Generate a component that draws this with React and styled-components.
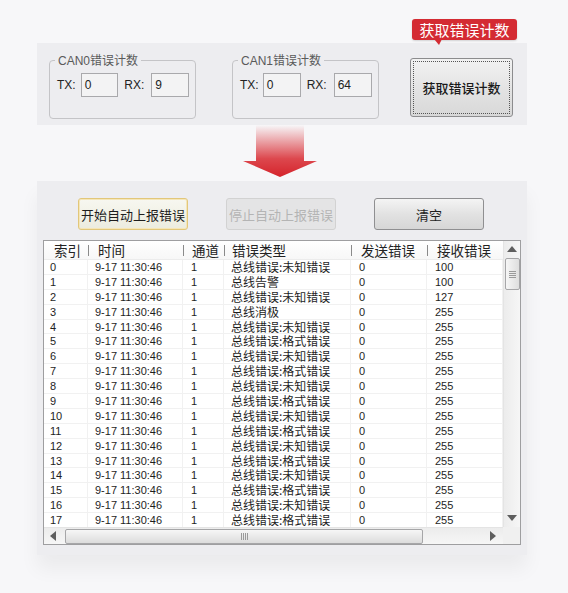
import styled, { createGlobalStyle } from "styled-components";

const GlobalStyle = createGlobalStyle`
  html, body { margin: 0; padding: 0; background: #f7f7f9; }
  body { font-family: "Liberation Sans", "Noto Sans CJK SC", sans-serif; color: #1e1e1e; }
`;

const Page = styled.div`
  width: 568px;
  height: 593px;
  overflow: hidden;
  background: #f7f7f9;
  display: flex;
  flex-direction: column;
`;

const TopPanel = styled.div`
  margin: 43px 0 0 37px;
  width: 490px;
  height: 82px;
  box-sizing: border-box;
  background: #ededf0;
  display: flex;
  align-items: flex-start;
  padding: 17px 0 0 12px;
`;

const GroupBox = styled.div`
  position: relative;
  width: 147px;
  height: 59px;
  box-sizing: border-box;
  border: 1px solid #c4c4c7;
  border-radius: 4px;
  margin-right: ${(p) => p.$gap}px;
  display: flex;
  align-items: flex-start;
  padding: 12px 0 0 7px;
`;

const GroupTitle = styled.span`
  position: absolute;
  top: -8px;
  left: 5px;
  padding: 0 3px;
  background: #ededf0;
  font-size: 12px;
  line-height: 16px;
  color: #5a5a5a;
`;

const FieldLabel = styled.span`
  font-size: 12px;
  line-height: 24px;
  color: #222;
  margin-right: ${(p) => p.$gap}px;
`;

const ValueBox = styled.div`
  width: 38px;
  height: 24px;
  box-sizing: border-box;
  border: 1px solid #a9a9ac;
  background: #f3f3f4;
  font-size: 12px;
  line-height: 22px;
  padding-left: 3px;
  margin-right: 6px;
  color: #222;
`;

const ButtonWrap = styled.div`
  position: relative;
  margin-top: -2px;
`;

const FetchButton = styled.div`
  width: 103px;
  height: 59px;
  box-sizing: border-box;
  border: 1px solid #8c8c8e;
  border-radius: 3px;
  background: linear-gradient(#f2f2f2, #e4e4e4 50%, #d8d8d8);
  padding: 2px;
  display: flex;
`;

const FocusRing = styled.div`
  flex: 1;
  border: 1px dotted #555;
  display: flex;
  align-items: center;
  justify-content: center;
  font-size: 13px;
  font-weight: 500;
  color: #1a1a1a;
  font-family: "Noto Sans CJK SC", sans-serif;
`;

const Tooltip = styled.div`
  position: absolute;
  left: 2px;
  top: -39px;
  width: 105px;
  height: 21px;
  border-radius: 3px;
  background: #d42b33;
  color: #fff;
  font-size: 15px;
  line-height: 21px;
  text-align: center;
  font-family: "Noto Sans CJK SC", sans-serif;
  box-shadow: 0 1px 2px rgba(0, 0, 0, 0.15);
  &::after {
    content: "";
    position: absolute;
    left: 22px;
    bottom: -5px;
    border-left: 5px solid transparent;
    border-right: 3px solid transparent;
    border-top: 6px solid #d42b33;
  }
`;

const Arrow = styled.svg`
  display: block;
  margin: 0 0 4px 243px;
`;

const BottomPanel = styled.div`
  margin-left: 37px;
  width: 490px;
  height: 374px;
  box-sizing: border-box;
  background: #ededf0;
  padding: 17px 6px 0;
  box-shadow: 0 14px 18px rgba(0, 0, 0, 0.05);
`;

const ButtonRow = styled.div`
  display: flex;
  gap: 38px;
  padding-left: 35px;
  margin-bottom: 10px;
`;

const ActionButton = styled.div`
  width: 110px;
  height: 32px;
  box-sizing: border-box;
  border-radius: 3px;
  display: flex;
  align-items: center;
  justify-content: center;
  font-size: 13px;
  font-family: "Noto Sans CJK SC", sans-serif;
  border: 1px solid ${(p) => (p.$variant === "hot" ? "#e2c77a" : p.$variant === "off" ? "#d2d2d2" : "#8f8f91")};
  color: ${(p) => (p.$variant === "off" ? "#b4b4b4" : "#1e1e1e")};
  background: ${(p) =>
    p.$variant === "hot"
      ? "linear-gradient(#f7f7f0, #ececdf)"
      : p.$variant === "off"
      ? "#e4e4e5"
      : "linear-gradient(#f4f4f4, #e2e2e2 50%, #d6d6d6)"};
  box-shadow: ${(p) => (p.$variant === "hot" ? "inset 0 0 0 1px #f5e6b8" : "none")};
`;

const ListBox = styled.div`
  width: 478px;
  height: 305px;
  box-sizing: border-box;
  border: 1px solid #9e9ea0;
  background: #fff;
  display: grid;
  grid-template-columns: 1fr 17px;
  grid-template-rows: 1fr 17px;
  overflow: hidden;
`;

const ListBody = styled.div`
  overflow: hidden;
`;

const cols = "44px 95px 41px 127px 76px 1fr";

const HeaderRow = styled.div`
  display: grid;
  grid-template-columns: ${cols};
  height: 18px;
  background: linear-gradient(#fff, #f7f7f7);
  border-bottom: 1px solid #ececec;
`;

const HeadCell = styled.div`
  position: relative;
  font-size: 13.5px;
  line-height: 18px;
  padding-left: ${(p) => p.$pad}px;
  font-family: "Noto Sans CJK SC", sans-serif;
  color: #222;
  white-space: nowrap;
  &::before {
    content: "";
    display: ${(p) => (p.$first ? "none" : "block")};
    position: absolute;
    left: 0;
    top: 4px;
    height: 11px;
    border-left: 1px solid #8a8a8a;
  }
`;

const DataRow = styled.div`
  display: grid;
  grid-template-columns: ${cols};
  height: 14.9px;
  border-bottom: 1px solid #f1f1f1;
  box-sizing: border-box;
`;

const Cell = styled.div`
  font-size: ${(p) => (p.$cjk ? 12 : 11)}px;
  line-height: 14px;
  height: 14px;
  padding-left: ${(p) => p.$pad}px;
  white-space: nowrap;
  color: #1e1e1e;
  border-right: 1px solid #f1f1f1;
  font-family: ${(p) => (p.$cjk ? '"Noto Sans CJK SC", sans-serif' : '"Liberation Sans", sans-serif')};
`;

const VScroll = styled.div`
  background: linear-gradient(90deg, #ececec, #f6f6f6);
  border-left: 1px solid #e4e4e4;
  display: flex;
  flex-direction: column;
  align-items: center;
`;

const HScroll = styled.div`
  background: linear-gradient(#ececec, #f6f6f6);
  border-top: 1px solid #e4e4e4;
  display: flex;
  align-items: center;
`;

const Corner = styled.div`
  background: #f0f0f0;
`;

const VThumb = styled.div`
  width: 15px;
  height: 32px;
  box-sizing: border-box;
  border: 1px solid #a6a6a8;
  border-radius: 2px;
  background: linear-gradient(90deg, #f6f6f6, #dedede);
  display: flex;
  flex-direction: column;
  align-items: center;
  justify-content: center;
  gap: 1px;
  margin-top: 1px;
`;

const HThumb = styled.div`
  width: 358px;
  height: 15px;
  box-sizing: border-box;
  border: 1px solid #a6a6a8;
  border-radius: 2px;
  background: linear-gradient(#f6f6f6, #dcdcdc);
  display: flex;
  align-items: center;
  justify-content: center;
  gap: 1px;
  margin-left: 4px;
`;

const Grip = styled.span`
  display: block;
  background: #9a9a9a;
  width: ${(p) => (p.$v ? "7px" : "1px")};
  height: ${(p) => (p.$v ? "1px" : "7px")};
`;

const Spacer = styled.div`
  flex: 1;
`;

const Tri = ({ dir }) => {
  const pts = {
    up: "0,6 5,0 10,6",
    down: "0,0 10,0 5,6",
    left: "6,0 6,10 0,5",
    right: "0,0 0,10 6,5",
  }[dir];
  const w = dir === "up" || dir === "down" ? 10 : 6;
  const h = dir === "up" || dir === "down" ? 6 : 10;
  return (
    <svg width={w} height={h} viewBox={`0 0 ${w} ${h}`} style={{ display: "block", flexShrink: 0 }}>
      <polygon points={pts} fill="#5e5e5e" />
    </svg>
  );
};

const TriBox = styled.div`
  width: ${(p) => p.$w}px;
  height: ${(p) => p.$h}px;
  display: flex;
  align-items: center;
  justify-content: center;
`;

const types = ["总线错误:未知错误", "总线告警", "总线错误:未知错误", "总线消极"];
const rows = Array.from({ length: 18 }, (_, i) => ({
  idx: i,
  type: i < 4 ? types[i] : i % 2 === 0 ? "总线错误:未知错误" : "总线错误:格式错误",
  recv: i < 2 ? 100 : i === 2 ? 127 : 255,
}));

const headers = [
  ["索引", 10],
  ["时间", 10],
  ["通道", 9],
  ["错误类型", 8],
  ["发送错误", 10],
  ["接收错误", 10],
];

export default function App() {
  return (
    <Page>
      <GlobalStyle />
      <TopPanel>
        <GroupBox $gap={36}>
          <GroupTitle>CAN0错误计数</GroupTitle>
          <FieldLabel $gap={5}>TX:</FieldLabel>
          <ValueBox>0</ValueBox>
          <FieldLabel $gap={7}>RX:</FieldLabel>
          <ValueBox>9</ValueBox>
        </GroupBox>
        <GroupBox $gap={31}>
          <GroupTitle>CAN1错误计数</GroupTitle>
          <FieldLabel $gap={4}>TX:</FieldLabel>
          <ValueBox>0</ValueBox>
          <FieldLabel $gap={7}>RX:</FieldLabel>
          <ValueBox>64</ValueBox>
        </GroupBox>
        <ButtonWrap>
          <Tooltip>获取错误计数</Tooltip>
          <FetchButton>
            <FocusRing>获取错误计数</FocusRing>
          </FetchButton>
        </ButtonWrap>
      </TopPanel>

      <Arrow width="74" height="52" viewBox="0 0 74 52">
        <defs>
          <linearGradient id="arrowFade" x1="0" y1="0" x2="0" y2="1">
            <stop offset="0" stopColor="#d8282f" stopOpacity="0" />
            <stop offset="0.65" stopColor="#d8282f" stopOpacity="0.85" />
            <stop offset="1" stopColor="#d4232b" stopOpacity="1" />
          </linearGradient>
        </defs>
        <polygon points="13,0 61,0 61,36 74,36 37,52 0,36 13,36" fill="url(#arrowFade)" />
      </Arrow>

      <BottomPanel>
        <ButtonRow>
          <ActionButton $variant="hot">开始自动上报错误</ActionButton>
          <ActionButton $variant="off">停止自动上报错误</ActionButton>
          <ActionButton>清空</ActionButton>
        </ButtonRow>
        <ListBox>
          <ListBody>
            <HeaderRow>
              {headers.map(([t, pad], i) => (
                <HeadCell key={t} $pad={pad} $first={i === 0}>
                  {t}
                </HeadCell>
              ))}
            </HeaderRow>
            {rows.map((r) => (
              <DataRow key={r.idx}>
                <Cell $pad={6}>{r.idx}</Cell>
                <Cell $pad={7}>9-17 11:30:46</Cell>
                <Cell $pad={8}>1</Cell>
                <Cell $pad={7} $cjk>
                  {r.type}
                </Cell>
                <Cell $pad={8}>0</Cell>
                <Cell $pad={8}>{r.recv}</Cell>
              </DataRow>
            ))}
          </ListBody>
          <VScroll>
            <TriBox $w={17} $h={16}>
              <Tri dir="up" />
            </TriBox>
            <VThumb>
              <Grip $v />
              <Grip $v />
              <Grip $v />
              <Grip $v />
            </VThumb>
            <Spacer />
            <TriBox $w={17} $h={18}>
              <Tri dir="down" />
            </TriBox>
          </VScroll>
          <HScroll>
            <TriBox $w={17} $h={16}>
              <Tri dir="left" />
            </TriBox>
            <HThumb>
              <Grip />
              <Grip />
              <Grip />
              <Grip />
            </HThumb>
            <Spacer />
            <TriBox $w={20} $h={16}>
              <Tri dir="right" />
            </TriBox>
          </HScroll>
          <Corner />
        </ListBox>
      </BottomPanel>
    </Page>
  );
}
